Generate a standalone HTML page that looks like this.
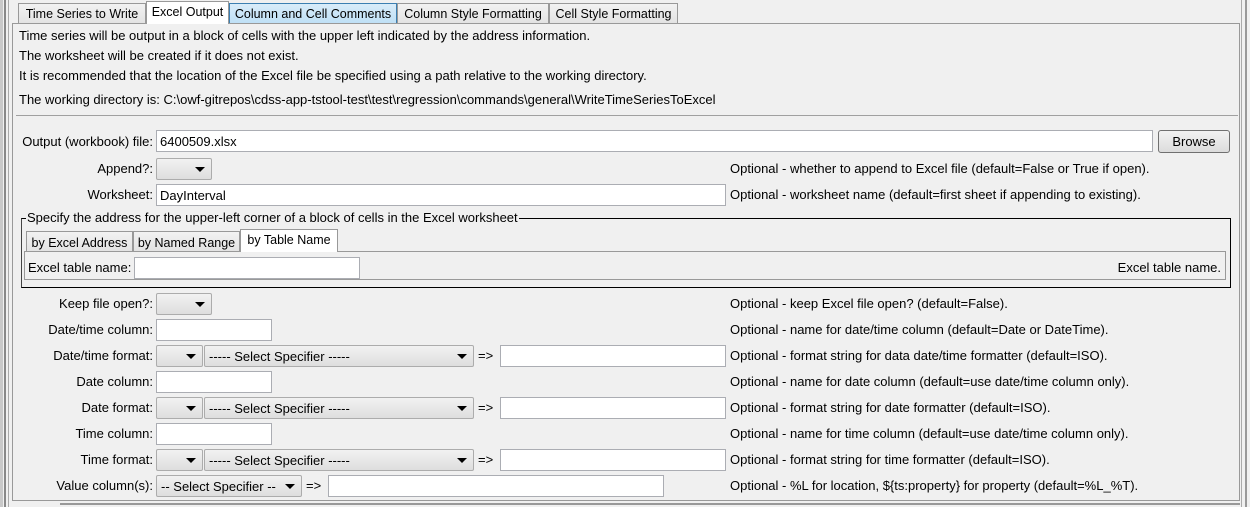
<!DOCTYPE html>
<html><head><meta charset="utf-8"><style>
body{margin:0;width:1250px;height:507px;background:#f0f0f0;font-family:"Liberation Sans",sans-serif;font-size:13px;color:#000;position:relative;overflow:hidden}
div,span{position:absolute;box-sizing:border-box}
.t{white-space:nowrap;line-height:14px}
.r{text-align:right}
.in{background:#fff;border:1px solid #abadb3;height:22px;padding:3px 3px;white-space:nowrap;line-height:15px}
.cb{border:1px solid #acacac;border-radius:2px;background:linear-gradient(#f2f2f2,#dedede);height:22px;white-space:nowrap;padding:3px 4px;line-height:15px}
.cb:after{content:"";position:absolute;right:6px;top:8px;border-left:5px solid transparent;border-right:5px solid transparent;border-top:5px solid #000}
.btn{border:1px solid #707070;border-radius:3px;background:linear-gradient(#f2f2f2,#dcdcdc);white-space:nowrap;padding:3px 0;line-height:15px;text-align:center}
.tab{top:3px;height:20px;border:1px solid #999;border-bottom:none;background:linear-gradient(#f2f2f2,#e3e3e3);padding:3px 0;text-align:center;white-space:nowrap;line-height:14px;font-size:12.5px;overflow:hidden}
</style></head><body>
<div style="left:0;top:0;width:3px;height:507px;background:#c8c8c8"></div>
<div style="left:4px;top:0;width:2px;height:507px;background:#888"></div>
<div style="left:8px;top:0;width:1px;height:507px;background:#aaa"></div>
<div style="left:1241px;top:0;width:1px;height:507px;background:#aaa"></div>
<div style="left:1245px;top:0;width:2px;height:507px;background:#999"></div>

<div style="left:12px;top:23px;width:1228px;height:478px;border:1px solid #999"></div>
<div style="left:60px;top:503px;width:1180px;height:2px;background:#999"></div>

<div class="tab" style="left:18px;width:128px">Time Series to Write</div>
<div class="tab" style="left:229px;width:168px;background:linear-gradient(#d9ecf9,#bfe0f6);border-color:#3c7fb1">Column and Cell Comments</div>
<div class="tab" style="left:397px;width:152px">Column Style Formatting</div>
<div class="tab" style="left:549px;width:129px">Cell Style Formatting</div>
<div class="tab" style="left:146px;top:1px;height:23px;width:83px;background:#fff;padding-top:3px">Excel Output</div>

<div class="t" style="left:19px;top:29px">Time series will be output in a block of cells with the upper left indicated by the address information.</div>
<div class="t" style="left:19px;top:49px">The worksheet will be created if it does not exist.</div>
<div class="t" style="left:19px;top:69px">It is recommended that the location of the Excel file be specified using a path relative to the working directory.</div>
<div class="t" style="left:19px;top:93px">The working directory is: C:\owf-gitrepos\cdss-app-tstool-test\test\regression\commands\general\WriteTimeSeriesToExcel</div>
<div style="left:16px;top:115px;width:1222px;height:1px;background:#a0a0a0"></div>

<div class="t r" style="left:0;width:153px;top:135px">Output (workbook) file:</div>
<div class="in" style="left:156px;top:130px;width:997px">6400509.xlsx</div>
<div class="btn" style="left:1158px;top:130px;width:72px;height:23px">Browse</div>

<div class="t r" style="left:0;width:153px;top:162px">Append?:</div>
<div class="cb" style="left:156px;top:158px;width:56px"></div>
<div class="t" style="left:730px;top:162px">Optional - whether to append to Excel file (default=False or True if open).</div>

<div class="t r" style="left:0;width:153px;top:188px">Worksheet:</div>
<div class="in" style="left:156px;top:184px;width:570px">DayInterval</div>
<div class="t" style="left:730px;top:188px">Optional - worksheet name (default=first sheet if appending to existing).</div>

<div style="left:21px;top:218px;width:1210px;height:70px;border:1px solid #000;border-left-color:#444"></div>
<div class="t" style="left:26px;top:211px;background:#f0f0f0;padding:0 1px">Specify the address for the upper-left corner of a block of cells in the Excel worksheet</div>
<div style="left:24px;top:251px;width:1202px;height:29px;border:1px solid #999"></div>
<div class="tab" style="left:26px;top:231px;width:107px;padding:4px 0">by Excel Address</div>
<div class="tab" style="left:133px;top:231px;width:107px;padding:4px 0">by Named Range</div>
<div class="tab" style="left:240px;top:229px;width:98px;height:23px;background:#fff;padding:3px 0">by Table Name</div>
<div class="t" style="left:28px;top:261px">Excel table name:</div>
<div class="in" style="left:134px;top:257px;width:226px"></div>
<div class="t r" style="left:0;width:1221px;top:261px">Excel table name.</div>

<div class="t r" style="left:0;width:153px;top:297px">Keep file open?:</div>
<div class="cb" style="left:156px;top:293px;width:56px"></div>
<div class="t" style="left:730px;top:297px">Optional - keep Excel file open? (default=False).</div>

<div class="t r" style="left:0;width:153px;top:323px">Date/time column:</div>
<div class="in" style="left:156px;top:319px;width:116px"></div>
<div class="t" style="left:730px;top:323px">Optional - name for date/time column (default=Date or DateTime).</div>

<div class="t r" style="left:0;width:153px;top:349px">Date/time format:</div>
<div class="cb" style="left:156px;top:345px;width:47px"></div>
<div class="cb" style="left:204px;top:345px;width:270px">----- Select Specifier -----</div>
<div class="t" style="left:478px;top:349px">=&gt;</div>
<div class="in" style="left:500px;top:345px;width:226px"></div>
<div class="t" style="left:730px;top:349px">Optional - format string for data date/time formatter (default=ISO).</div>

<div class="t r" style="left:0;width:153px;top:375px">Date column:</div>
<div class="in" style="left:156px;top:371px;width:116px"></div>
<div class="t" style="left:730px;top:375px">Optional - name for date column (default=use date/time column only).</div>

<div class="t r" style="left:0;width:153px;top:401px">Date format:</div>
<div class="cb" style="left:156px;top:397px;width:47px"></div>
<div class="cb" style="left:204px;top:397px;width:270px">----- Select Specifier -----</div>
<div class="t" style="left:478px;top:401px">=&gt;</div>
<div class="in" style="left:500px;top:397px;width:226px"></div>
<div class="t" style="left:730px;top:401px">Optional - format string for date formatter (default=ISO).</div>

<div class="t r" style="left:0;width:153px;top:427px">Time column:</div>
<div class="in" style="left:156px;top:423px;width:116px"></div>
<div class="t" style="left:730px;top:427px">Optional - name for time column (default=use date/time column only).</div>

<div class="t r" style="left:0;width:153px;top:453px">Time format:</div>
<div class="cb" style="left:156px;top:449px;width:47px"></div>
<div class="cb" style="left:204px;top:449px;width:270px">----- Select Specifier -----</div>
<div class="t" style="left:478px;top:453px">=&gt;</div>
<div class="in" style="left:500px;top:449px;width:226px"></div>
<div class="t" style="left:730px;top:453px">Optional - format string for time formatter (default=ISO).</div>

<div class="t r" style="left:0;width:153px;top:479px">Value column(s):</div>
<div class="cb" style="left:156px;top:475px;width:146px">-- Select Specifier --</div>
<div class="t" style="left:306px;top:479px">=&gt;</div>
<div class="in" style="left:328px;top:475px;width:336px"></div>
<div class="t" style="left:730px;top:479px">Optional - %L for location, ${ts:property} for property (default=%L_%T).</div>
</body></html>
